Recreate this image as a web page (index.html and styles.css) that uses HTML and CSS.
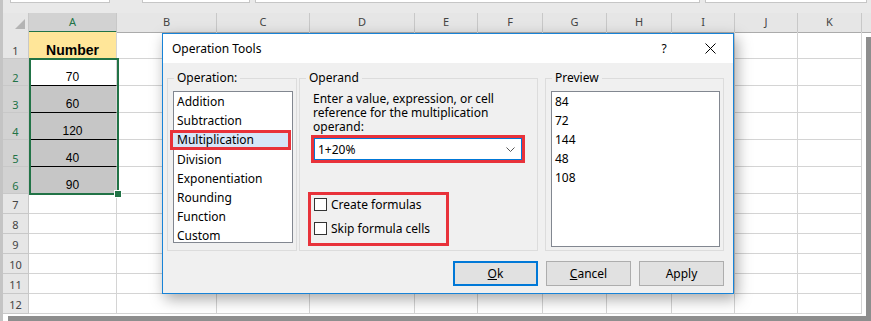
FILE: index.html
```html
<!DOCTYPE html>
<html lang="en">

<head>
  <meta charset="UTF-8">
  <meta name="viewport" content="width=device-width, initial-scale=1.0">
  <title>Operation Tools</title>
  <link rel="stylesheet" href="styles.css">
</head>

<body>
  <div class="app">
    <div class="topbar">
      <div class="box box-name"></div>
      <div class="box box-fx"></div>
      <div class="box box-formula"></div>
      <div class="box box-end"></div>
    </div>

    <div class="colhead">
      <div class="corner"><span class="tri"></span></div>
      <div class="sel">A</div>
      <div>B</div>
      <div>C</div>
      <div>D</div>
      <div>E</div>
      <div>F</div>
      <div>G</div>
      <div>H</div>
      <div>I</div>
      <div>J</div>
      <div>K</div>
      <div class="rest"></div>
    </div>

    <div class="sheet">
      <div class="row"><div class="rh">1</div><div class="head-cell">Number</div><div></div><div></div><div></div><div></div><div></div><div></div><div></div><div></div><div></div><div></div></div>
      <div class="row"><div class="rh sel">2</div><div class="val active">70</div><div></div><div></div><div></div><div></div><div></div><div></div><div></div><div></div><div></div><div></div></div>
      <div class="row"><div class="rh sel">3</div><div class="val">60</div><div></div><div></div><div></div><div></div><div></div><div></div><div></div><div></div><div></div><div></div></div>
      <div class="row"><div class="rh sel">4</div><div class="val">120</div><div></div><div></div><div></div><div></div><div></div><div></div><div></div><div></div><div></div><div></div></div>
      <div class="row"><div class="rh sel">5</div><div class="val">40</div><div></div><div></div><div></div><div></div><div></div><div></div><div></div><div></div><div></div><div></div></div>
      <div class="row"><div class="rh sel">6</div><div class="val last">90</div><div></div><div></div><div></div><div></div><div></div><div></div><div></div><div></div><div></div><div></div></div>
      <div class="row short"><div class="rh">7</div><div></div><div></div><div></div><div></div><div></div><div></div><div></div><div></div><div></div><div></div><div></div></div>
      <div class="row short"><div class="rh">8</div><div></div><div></div><div></div><div></div><div></div><div></div><div></div><div></div><div></div><div></div><div></div></div>
      <div class="row short"><div class="rh">9</div><div></div><div></div><div></div><div></div><div></div><div></div><div></div><div></div><div></div><div></div><div></div></div>
      <div class="row short"><div class="rh">10</div><div></div><div></div><div></div><div></div><div></div><div></div><div></div><div></div><div></div><div></div><div></div></div>
      <div class="row short"><div class="rh">11</div><div></div><div></div><div></div><div></div><div></div><div></div><div></div><div></div><div></div><div></div><div></div></div>
      <div class="row short"><div class="rh">12</div><div></div><div></div><div></div><div></div><div></div><div></div><div></div><div></div><div></div><div></div><div></div></div>
    </div>

    <div class="selection"><span class="handle"></span></div>

    <div class="dialog">
      <div class="titlebar">
        <span class="title">Operation Tools</span>
        <span class="tb-btn">?</span>
        <span class="tb-btn">
          <svg width="11" height="11" viewBox="0 0 11 11">
            <path d="M0.5 0.5 L10.5 10.5 M10.5 0.5 L0.5 10.5" stroke="#000" stroke-width="1" fill="none" />
          </svg>
        </span>
      </div>

      <div class="dialog-body">
        <div class="groups">
          <fieldset class="group group-op">
            <legend>Operation:</legend>
            <ul class="list op-list">
              <li>Addition</li>
              <li>Subtraction</li>
              <li class="marked">Multiplication</li>
              <li>Division</li>
              <li>Exponentiation</li>
              <li>Rounding</li>
              <li>Function</li>
              <li>Custom</li>
            </ul>
          </fieldset>

          <fieldset class="group group-operand">
            <legend>Operand</legend>
            <p class="hint">Enter a value, expression, or cell reference for the multiplication operand:</p>
            <div class="mark mark-combo">
              <div class="combo">
                <span>1+20%</span>
                <svg width="9" height="5" viewBox="0 0 9 5">
                  <path d="M0.5 0.5 L4.5 4.5 L8.5 0.5" stroke="#555" stroke-width="1" fill="none" />
                </svg>
              </div>
            </div>
            <div class="mark mark-checks">
              <label class="check"><span class="box-check"></span>Create formulas</label>
              <label class="check"><span class="box-check"></span>Skip formula cells</label>
            </div>
          </fieldset>

          <fieldset class="group group-preview">
            <legend>Preview</legend>
            <ul class="list preview-list">
              <li>84</li>
              <li>72</li>
              <li>144</li>
              <li>48</li>
              <li>108</li>
            </ul>
          </fieldset>
        </div>

        <div class="buttons">
          <button class="btn default"><u>O</u>k</button>
          <button class="btn"><u>C</u>ancel</button>
          <button class="btn">Apply</button>
        </div>
      </div>
    </div>
  </div>
</body>

</html>
```

FILE: styles.css
```css
body {
  margin: 0;
  font-family: "Noto Sans", sans-serif;
  font-size: 11px;
  color: #000;
  background: #fff;
}

.app {
  position: relative;
  width: 871px;
  height: 321px;
  box-sizing: border-box;
  overflow: hidden;
  border-left: 3px solid #c4c4c4;
  background: #fff;
}

/* formula bar remains at the very top */
.topbar {
  height: 13px;
  display: flex;
  align-items: flex-start;
  background: #e9e9e9;
}

.box {
  height: 2px;
  background: #fff;
  border: 1px solid #c6c6c6;
  border-top: none;
}

.box-name { margin-left: 7px; width: 98px; }
.box-fx { margin-left: 32px; width: 106px; }
.box-formula { margin-left: 5px; width: 443px; }
.box-end { margin-left: 5px; width: 160px; }

/* sheet grid */
.colhead,
.row {
  display: grid;
  grid-template-columns: 26px 88px 100px 93px 105px 63px 65px 64px 65px 63px 63px 64px;
}

.colhead {
  height: 19px;
  grid-template-columns: 26px 88px 100px 93px 105px 63px 65px 64px 65px 63px 63px 64px 1fr;
  background: #e6e6e6;
}

.colhead > div {
  box-sizing: border-box;
  border-right: 1px solid #c8c8c8;
  border-bottom: 1px solid #ababab;
  text-align: center;
  line-height: 18px;
  color: #444;
}

.colhead > .sel {
  background: #d2d2d2;
  color: #217346;
  border-bottom: 2px solid #217346;
}

.colhead > .rest {
  border-right: none;
}

.colhead > .corner {
  display: flex;
  justify-content: flex-end;
  align-items: flex-end;
  padding: 0 3px 3px 0;
}

.tri {
  width: 0;
  height: 0;
  border-left: 10px solid transparent;
  border-bottom: 10px solid #b4b4b4;
}

.sheet {
  width: 863px;
  padding-bottom: 2px;
  background: #fff;
  box-shadow: 5px 5px 0 #8e8e8e;
}

.row {
  height: 27px;
}

.row.short {
  height: 20px;
}

.row > div {
  box-sizing: border-box;
  border-right: 1px solid #d4d4d4;
  border-bottom: 1px solid #d4d4d4;
  display: flex;
  align-items: flex-end;
  justify-content: center;
  padding-bottom: 1px;
  font-family: "Liberation Sans", Arial, sans-serif;
  font-size: 12px;
}

.row > .rh {
  background: #e6e6e6;
  border-color: #c8c8c8;
  color: #444;
  font-family: "Noto Sans", sans-serif;
  font-size: 11px;
  padding-bottom: 0;
}

.row.short > .rh {
  padding-bottom: 1px;
}

.row > .rh.sel {
  background: #d2d2d2;
  color: #217346;
}

.row > .head-cell {
  background: #ffe699;
  font-weight: bold;
  font-size: 14px;
  padding-bottom: 0;
}

.row > .val {
  background: #c6c6c6;
  border-bottom-color: #000;
}

.row > .val.active {
  background: #fff;
}

.row > .val.last {
  border-bottom-color: #d4d4d4;
}

.selection {
  position: absolute;
  left: 26px;
  top: 58px;
  width: 90px;
  height: 137px;
  box-sizing: border-box;
  border: 2px solid #217346;
}

.handle {
  position: absolute;
  right: -5px;
  bottom: -5px;
  width: 6px;
  height: 6px;
  background: #217346;
  border: 1px solid #fff;
}

/* dialog */
.dialog {
  position: absolute;
  left: 159px;
  top: 33px;
  width: 572px;
  height: 261px;
  box-sizing: border-box;
  border: 1px solid #1883d7;
  background: #f0f0f0;
  box-shadow: 3px 5px 14px rgba(0, 0, 0, 0.35);
  display: flex;
  flex-direction: column;
}

.titlebar {
  height: 29px;
  flex-shrink: 0;
  background: #fff;
  display: flex;
  align-items: center;
  padding-left: 9px;
  font-size: 12px;
}

.title {
  flex: 1;
}

.tb-btn {
  width: 46px;
  height: 29px;
  display: flex;
  align-items: center;
  justify-content: center;
}

.dialog-body {
  padding: 7px 9px 0 4px;
}

.groups {
  display: flex;
  align-items: stretch;
}

.group {
  margin: 0;
  padding: 5px 3px 0 5px;
  border: 1px solid #dcdcdc;
  min-width: 0;
  box-sizing: border-box;
}

.group legend {
  padding: 0 3px;
  margin-left: 1px;
  line-height: 16px;
  font-size: 12px;
}

.group-op {
  width: 130px;
  margin-right: 2px;
}

.group-operand {
  width: 239px;
  margin-right: 7px;
}

.group-preview {
  width: 179px;
}

.list {
  list-style: none;
  margin: 0;
  padding: 0;
  background: #fff;
  border: 1px solid #828790;
  box-sizing: border-box;
}

.list li {
  line-height: 19px;
  padding-left: 3px;
  font-size: 12px;
}

.op-list {
  height: 152px;
  margin-bottom: 7px;
}

.op-list li.marked {
  margin-left: -4px;
  margin-right: 1px;
  border: 3px solid #e8323a;
  line-height: 14px;
  padding-left: 4px;
  background: #d6e6f8;
}

.preview-list {
  height: 156px;
  margin-bottom: 3px;
}

.hint {
  margin: 1px 0 0 8px;
  line-height: 14px;
  font-size: 12px;
}

.mark {
  border: 3px solid #e8323a;
  box-sizing: border-box;
}

.mark-combo {
  width: 214px;
  margin: 1px 0 0 6px;
}

.combo {
  height: 22px;
  box-sizing: border-box;
  border: 1px solid #0078d7;
  background: #fff;
  display: flex;
  align-items: center;
  justify-content: space-between;
  padding: 0 6px 0 3px;
  font-size: 12px;
}

.mark-checks {
  width: 141px;
  margin: 29px 0 0 3px;
  padding: 3px 0 8px 3px;
  display: flex;
  flex-direction: column;
  gap: 11px;
}

.check {
  display: flex;
  align-items: center;
  height: 13px;
  font-size: 12px;
}

.box-check {
  width: 13px;
  height: 13px;
  box-sizing: border-box;
  border: 1px solid #333;
  background: #fff;
  margin-right: 4px;
}

.buttons {
  margin-top: 10px;
  display: flex;
  justify-content: flex-end;
  gap: 8px;
}

.btn {
  width: 85px;
  height: 25px;
  padding: 0;
  font-family: "Noto Sans", sans-serif;
  font-size: 12px;
  color: #000;
  background: #e1e1e1;
  border: 1px solid #adadad;
}

.btn.default {
  border: 2px solid #0078d7;
}
```
